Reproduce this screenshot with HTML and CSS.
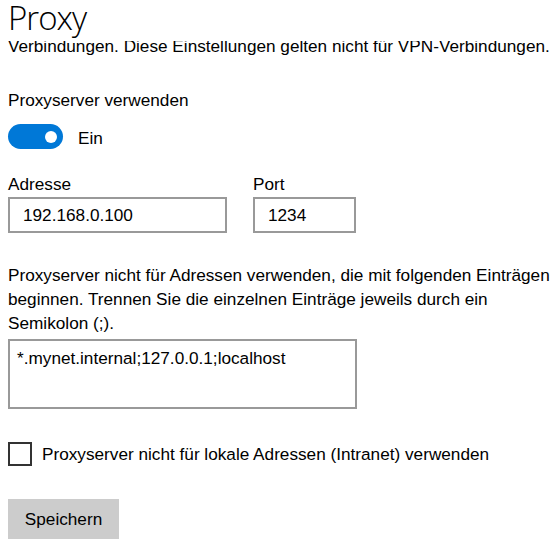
FILE: index.html
```html
<!DOCTYPE html>
<html lang="de">
<head>
<meta charset="utf-8">
<title>Proxy</title>
<link rel="stylesheet" href="styles.css">
</head>
<body>
<div class="page">
  <header class="header">
    <h1 class="title">Proxy</h1>
  </header>
  <div class="scroll">
    <div class="content">
      <p class="intro">Verbindungen. Diese Einstellungen gelten nicht für VPN-Verbindungen.</p>

      <div class="label use-label">Proxyserver verwenden</div>
      <div class="toggle-row">
        <span class="toggle"><span class="knob"></span></span>
        <span class="toggle-text">Ein</span>
      </div>

      <div class="fields">
        <div class="field">
          <div class="label">Adresse</div>
          <div class="input addr">192.168.0.100</div>
        </div>
        <div class="field">
          <div class="label">Port</div>
          <div class="input port">1234</div>
        </div>
      </div>

      <p class="desc">Proxyserver nicht für Adressen verwenden, die mit folgenden Einträgen beginnen. Trennen Sie die einzelnen Einträge jeweils durch ein Semikolon (;).</p>

      <div class="textarea">*.mynet.internal;127.0.0.1;localhost</div>

      <div class="check-row">
        <span class="checkbox"></span>
        <span class="check-text">Proxyserver nicht für lokale Adressen (Intranet) verwenden</span>
      </div>

      <button class="btn" type="button">Speichern</button>
    </div>
  </div>
</div>
</body>
</html>
```

FILE: styles.css
```css
html, body {
  margin: 0;
  padding: 0;
  background: #ffffff;
  height: 100%;
  overflow: hidden;
}

.page {
  font-family: "Liberation Sans", Arial, sans-serif;
  font-size: 17.2px;
  line-height: 24px;
  color: #000000;
  height: 543px;
  display: flex;
  flex-direction: column;
}

.header {
  height: 41px;
  flex: none;
  padding: 0 8px;
  background: #ffffff;
}

.title {
  margin: 0;
  font-family: "Open Sans", "Liberation Sans", sans-serif;
  font-weight: 300;
  font-size: 33px;
  line-height: 35px;
  letter-spacing: -1px;
  color: #000000;
}

.scroll {
  flex: 1;
  overflow: hidden;
  padding: 0 8px;
}

.content {
  margin-top: -7px;
}

.intro {
  margin: 0;
  white-space: nowrap;
}

.label {
  line-height: 24px;
}

.use-label {
  margin-top: 30px;
}

.toggle-row {
  display: flex;
  align-items: center;
  margin-top: 12px;
  height: 25px;
}

.toggle {
  width: 55px;
  height: 25px;
  border-radius: 13px;
  background: #0078d7;
  display: flex;
  align-items: center;
  justify-content: flex-end;
  padding-right: 6px;
  box-sizing: border-box;
}

.knob {
  width: 12px;
  height: 12px;
  border-radius: 50%;
  background: #ffffff;
}

.toggle-text {
  margin-left: 15px;
  padding-top: 3px;
}

.fields {
  display: flex;
  gap: 26px;
  margin-top: 23px;
}

.input {
  box-sizing: border-box;
  height: 36px;
  border: 2px solid #999999;
  padding: 4px 12px 0 13px;
  margin-top: 1px;
}

.addr {
  width: 219px;
}

.port {
  width: 103px;
}

.desc {
  margin: 30px 0 0 0;
}

.textarea {
  box-sizing: border-box;
  width: 349px;
  height: 70px;
  border: 2px solid #999999;
  padding: 5px 7px;
  margin-top: 4px;
}

.check-row {
  display: flex;
  align-items: center;
  margin-top: 33px;
  height: 24px;
}

.checkbox {
  box-sizing: border-box;
  width: 24px;
  height: 24px;
  border: 2px solid #333333;
  flex: none;
}

.check-text {
  margin-left: 10px;
}

.btn {
  display: block;
  margin-top: 33px;
  width: 111px;
  height: 40px;
  border: none;
  background: #cccccc;
  font-family: inherit;
  font-size: 17.2px;
  color: #000000;
  padding: 0;
}
```
